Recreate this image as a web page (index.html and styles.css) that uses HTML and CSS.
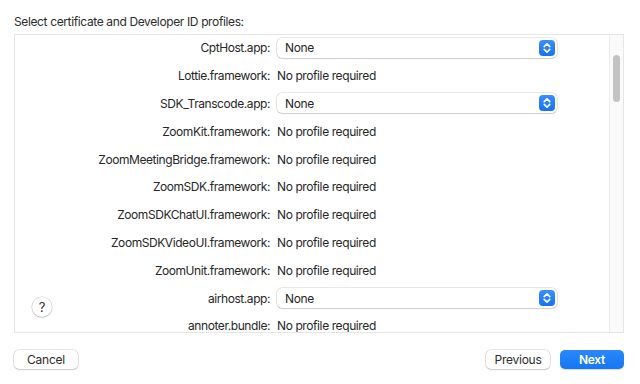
FILE: index.html
```html
<!DOCTYPE html>
<html>
<head>
<meta charset="utf-8">
<link rel="stylesheet" href="styles.css">
</head>
<body>
<div class="dialog">
  <div class="title">Select certificate and Developer ID profiles:</div>
  <div class="table">
    <div class="rows">
      <div class="row"><span class="label">CptHost.app:</span><div class="popup"><span>None</span><span class="stepper"><svg width="16" height="16" viewBox="0 0 16 16"><path d="M5.2 6.6 L8 3.9 L10.8 6.6 M5.2 9.4 L8 12.1 L10.8 9.4" fill="none" stroke="#fff" stroke-width="1.6" stroke-linecap="round" stroke-linejoin="round"/></svg></span></div></div>
      <div class="row"><span class="label">Lottie.framework:</span><span class="value">No profile required</span></div>
      <div class="row"><span class="label">SDK_Transcode.app:</span><div class="popup"><span>None</span><span class="stepper"><svg width="16" height="16" viewBox="0 0 16 16"><path d="M5.2 6.6 L8 3.9 L10.8 6.6 M5.2 9.4 L8 12.1 L10.8 9.4" fill="none" stroke="#fff" stroke-width="1.6" stroke-linecap="round" stroke-linejoin="round"/></svg></span></div></div>
      <div class="row"><span class="label">ZoomKit.framework:</span><span class="value">No profile required</span></div>
      <div class="row"><span class="label">ZoomMeetingBridge.framework:</span><span class="value">No profile required</span></div>
      <div class="row"><span class="label">ZoomSDK.framework:</span><span class="value">No profile required</span></div>
      <div class="row"><span class="label">ZoomSDKChatUI.framework:</span><span class="value">No profile required</span></div>
      <div class="row"><span class="label">ZoomSDKVideoUI.framework:</span><span class="value">No profile required</span></div>
      <div class="row"><span class="label">ZoomUnit.framework:</span><span class="value">No profile required</span></div>
      <div class="row"><span class="label">airhost.app:</span><div class="popup"><span>None</span><span class="stepper"><svg width="16" height="16" viewBox="0 0 16 16"><path d="M5.2 6.6 L8 3.9 L10.8 6.6 M5.2 9.4 L8 12.1 L10.8 9.4" fill="none" stroke="#fff" stroke-width="1.6" stroke-linecap="round" stroke-linejoin="round"/></svg></span></div></div>
      <div class="row"><span class="label">annoter.bundle:</span><span class="value">No profile required</span></div>
    </div>
    <div class="scrollbar"><div class="thumb"></div></div>
    <button class="help">?</button>
  </div>
  <div class="footer">
    <button class="btn">Cancel</button>
    <div class="right">
      <button class="btn">Previous</button>
      <button class="btn primary">Next</button>
    </div>
  </div>
</div>
</body>
</html>
```
FILE: styles.css
```css
* { box-sizing: border-box; }
html, body {
  margin: 0;
  padding: 0;
  width: 640px;
  height: 384px;
  background: #ffffff;
  font-family: "Inter", "Liberation Sans", sans-serif;
  font-size: 12px;
  letter-spacing: -0.4px;
  color: #262626;
  overflow: hidden;
}
.dialog {
  padding: 14px 16px 0 14px;
}
.title {
  height: 20px;
  line-height: 15px;
  color: #2b2b2b;
  letter-spacing: -0.37px;
}
.table {
  position: relative;
  height: 299px;
  border: 1px solid #e6e6e6;
  background: #fff;
  display: flex;
  overflow: hidden;
}
.rows {
  flex: 1;
  margin-top: -1px;
}
.row {
  height: 27.8px;
  display: grid;
  grid-template-columns: 255px 1fr;
  column-gap: 7px;
  align-items: center;
}
.label {
  text-align: right;
  white-space: nowrap;
  letter-spacing: -0.43px;
}
.value {
  white-space: nowrap;
}
.popup {
  width: 280px;
  height: 20px;
  border-radius: 5px;
  background: #fff;
  box-shadow: 0 0 0 0.5px rgba(0,0,0,0.18), 0 1px 1.5px rgba(0,0,0,0.12);
  display: flex;
  align-items: center;
  justify-content: space-between;
  padding: 0 2px 0 8px;
}
.stepper {
  width: 16px;
  height: 16px;
  border-radius: 4px;
  background: linear-gradient(#3a8ffb, #1772f0);
  display: flex;
}
.scrollbar {
  width: 14px;
  border-left: 1px solid #ececec;
  background: #fafafa;
  padding: 20px 0 0 3px;
}
.thumb {
  width: 7px;
  height: 47px;
  border-radius: 4px;
  background: #c3c3c3;
}
.help {
  position: absolute;
  left: 17px;
  top: 262px;
  width: 20px;
  height: 20px;
  border-radius: 50%;
  border: none;
  background: #fff;
  box-shadow: 0 0 0 0.5px rgba(0,0,0,0.18), 0 1px 1.5px rgba(0,0,0,0.15);
  font-family: inherit;
  font-size: 13px;
  letter-spacing: 0;
  color: #333;
  padding: 0;
  line-height: 20px;
}
.footer {
  margin-top: 17px;
  display: flex;
  justify-content: space-between;
  align-items: center;
}
.right {
  display: flex;
  gap: 10px;
}
.btn {
  width: 64px;
  height: 19px;
  border: none;
  border-radius: 5px;
  background: #fff;
  box-shadow: 0 0 0 0.5px rgba(0,0,0,0.2), 0 1px 1.5px rgba(0,0,0,0.12);
  font-family: inherit;
  font-size: 12px;
  letter-spacing: -0.25px;
  color: #2b2b2b;
  padding: 0;
}
.btn.primary {
  background: linear-gradient(#2a88fb, #1577f5);
  color: #fff;
  font-weight: 600;
  box-shadow: 0 0.5px 1px rgba(0,0,0,0.15);
}
```
